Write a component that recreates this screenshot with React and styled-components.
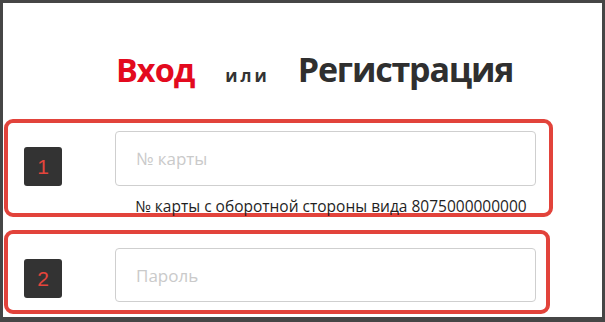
import React from "react";
import styled, { createGlobalStyle } from "styled-components";

const Global = createGlobalStyle`
  html, body { margin: 0; padding: 0; background: #fff; }
  * { box-sizing: border-box; }
`;

const Frame = styled.div`
  width: 605px;
  height: 322px;
  border: 3px solid #464646;
  border-bottom-width: 5px;
  background: #fff;
  padding-left: 1px;
  font-family: "Open Sans", "Liberation Sans", sans-serif;
  color: #333;
  overflow: hidden;
`;

const Header = styled.div`
  height: 116px;
  padding: 49px 0 0 112px;
  display: flex;
  align-items: baseline;
`;

const Tab = styled.span`
  font-size: ${(p) => (p.$active ? 32.5 : 34)}px;
  line-height: 1;
  font-weight: 700;
  letter-spacing: ${(p) => (p.$active ? -1 : -1.2)}px;
  color: ${(p) => (p.$active ? "#e30a1e" : "#2f2f2f")};
`;

const Or = styled.span`
  font-size: 17px;
  font-weight: 700;
  letter-spacing: 3px;
  margin: 0 28px 0 31px;
  color: #333;
`;

const Section = styled.div`
  width: ${(p) => p.$w}px;
  height: ${(p) => p.$h}px;
  margin-bottom: 13px;
  border: 4px solid #e2433b;
  border-radius: 9px;
  display: grid;
  grid-template-columns: 107px 421px;
  align-content: start;
  padding-top: ${(p) => p.$pt}px;
`;

const Badge = styled.div`
  width: 38px;
  height: 39px;
  margin: ${(p) => p.$top}px 0 0 16px;
  border-radius: 3px;
  background: #333;
  color: #e4453c;
  font-family: "Liberation Sans", Arial, sans-serif;
  font-size: 21px;
  display: flex;
  align-items: center;
  justify-content: center;
`;

const Input = styled.input`
  height: ${(p) => p.$h}px;
  width: 421px;
  border: 1px solid #cfcfcf;
  border-radius: 4px;
  padding: 0 0 0 20px;
  font-family: "Open Sans", "Liberation Sans", sans-serif;
  font-size: 17px;
  color: #333;
  outline: none;
  &::placeholder { color: #cacaca; }
`;

const Hint = styled.div`
  grid-column: 2;
  margin: 10px 0 -3px 20px;
  font-size: 15.5px;
  line-height: 20px;
  color: #1f1f1f;
  white-space: nowrap;
`;

export default function App() {
  return (
    <>
      <Global />
      <Frame>
        <Header>
          <Tab $active>Вход</Tab>
          <Or>или</Or>
          <Tab>Регистрация</Tab>
        </Header>
        <Section $w={549} $h={98} $pt={8}>
          <Badge $top={16}>1</Badge>
          <Input $h={55} placeholder="№ карты" />
          <Hint>№ карты с оборотной стороны вида 8075000000000</Hint>
        </Section>
        <Section $w={546} $h={84} $pt={14}>
          <Badge $top={11}>2</Badge>
          <Input $h={54} type="password" placeholder="Пароль" />
        </Section>
      </Frame>
    </>
  );
}
